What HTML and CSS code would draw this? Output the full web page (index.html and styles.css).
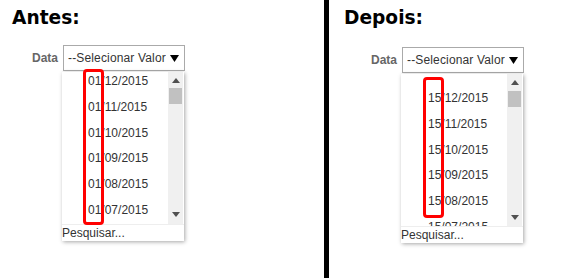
FILE: index.html
```html
<!DOCTYPE html>
<html lang="pt-BR">
  <head>
    <meta charset="UTF-8" />
    <meta name="viewport" content="width=device-width, initial-scale=1.0" />
    <title>Antes / Depois</title>
    <link rel="stylesheet" href="styles.css">
  </head>
  <body>
    <div class="page">
      <section class="panel panel-before">
        <h2>Antes:</h2>
        <div class="field">
          <span class="field-label">Data</span>
          <div class="combo">
            <div class="select">
              <span class="select-text">--Selecionar Valor</span>
              <svg class="caret" width="9" height="7" viewBox="0 0 9 7"><polygon points="0,0 9,0 4.5,7" /></svg>
            </div>
            <div class="dropdown">
              <div class="options">
                <ul class="option-list">
                  <li>01/12/2015</li>
                  <li>01/11/2015</li>
                  <li>01/10/2015</li>
                  <li>01/09/2015</li>
                  <li>01/08/2015</li>
                  <li>01/07/2015</li>
                </ul>
                <div class="scrollbar">
                  <div class="scroll-btn"><svg width="8" height="5" viewBox="0 0 8 5"><polygon points="0,5 8,5 4,0" /></svg></div>
                  <div class="scroll-thumb"></div>
                  <div class="scroll-space"></div>
                  <div class="scroll-btn scroll-btn-down"><svg width="8" height="5" viewBox="0 0 8 5"><polygon points="0,0 8,0 4,5" /></svg></div>
                </div>
              </div>
              <div class="search">Pesquisar...</div>
              <span class="highlight"></span>
            </div>
          </div>
        </div>
      </section>

      <div class="divider"></div>

      <section class="panel panel-after">
        <h2>Depois:</h2>
        <div class="field">
          <span class="field-label">Data</span>
          <div class="combo">
            <div class="select">
              <span class="select-text">--Selecionar Valor</span>
              <svg class="caret" width="9" height="7" viewBox="0 0 9 7"><polygon points="0,0 9,0 4.5,7" /></svg>
            </div>
            <div class="dropdown">
              <div class="options">
                <ul class="option-list">
                  <li>15/12/2015</li>
                  <li>15/11/2015</li>
                  <li>15/10/2015</li>
                  <li>15/09/2015</li>
                  <li>15/08/2015</li>
                  <li>15/07/2015</li>
                </ul>
                <div class="scrollbar">
                  <div class="scroll-btn"><svg width="8" height="5" viewBox="0 0 8 5"><polygon points="0,5 8,5 4,0" /></svg></div>
                  <div class="scroll-thumb"></div>
                  <div class="scroll-space"></div>
                  <div class="scroll-btn scroll-btn-down"><svg width="8" height="5" viewBox="0 0 8 5"><polygon points="0,0 8,0 4,5" /></svg></div>
                </div>
              </div>
              <div class="search">Pesquisar...</div>
              <span class="highlight"></span>
            </div>
          </div>
        </div>
      </section>
    </div>
  </body>
</html>
```

FILE: styles.css
```css
body {
  margin: 0;
  font-family: "Liberation Sans", Arial, sans-serif;
  font-size: 12px;
  color: #333;
  background: #fff;
}
.page {
  display: flex;
  height: 100vh;
}
.panel {
  padding-top: 7px;
  box-sizing: border-box;
}
.panel-before {
  width: 324px;
  padding-left: 12px;
}
.panel-after {
  flex: 1;
  padding-left: 15px;
}
.divider {
  width: 5px;
  background: #000;
}
.panel h2 {
  margin: 0;
  font-family: "DejaVu Sans", Verdana, sans-serif;
  font-size: 18.6px;
  line-height: 22px;
  font-weight: bold;
  color: #000;
}
.field {
  display: flex;
  align-items: flex-start;
  gap: 5px;
  margin: 16px 0 0 20px;
}
.panel-after .field {
  margin: 18px 0 0 27px;
}
.field-label {
  font-weight: bold;
  color: #666;
  line-height: 26px;
}
.combo {
  width: 122px;
}
.select {
  display: flex;
  align-items: center;
  height: 26px;
  box-sizing: border-box;
  border: 1px solid #aaa;
  padding: 0 5px 0 4px;
  background: #fff;
}
.select-text {
  flex: 1;
  overflow: hidden;
  white-space: nowrap;
  letter-spacing: 0.15px;
}
.caret {
  margin-left: 4px;
  fill: #000;
}
.dropdown {
  position: relative;
  width: 122px;
  margin: 1px 0 0 -1px;
  background: #fff;
  box-shadow: 1px 1px 4px rgba(0, 0, 0, 0.35);
}
.options {
  display: flex;
  height: 152px;
  overflow: hidden;
}
.option-list {
  flex: 1;
  list-style: none;
  margin: -3px 0 0;
  padding: 0 0 0 26px;
}
.panel-after .option-list {
  margin-top: 12px;
  padding-left: 27px;
}
.option-list li {
  height: 25.8px;
  line-height: 25.8px;
  white-space: nowrap;
}
.scrollbar {
  width: 15px;
  margin-right: 1px;
  display: flex;
  flex-direction: column;
  background: #f0f0f0;
}
.scroll-btn {
  height: 16px;
  display: flex;
  align-items: center;
  justify-content: center;
  fill: #505050;
}
.scroll-btn-down {
  height: 19px;
}
.panel-after .scroll-btn-down {
  height: 18px;
}
.panel-after .scroll-thumb {
  margin-top: 1px;
}
.scroll-thumb {
  height: 16px;
  margin: 0 1px;
  background: #c1c1c1;
}
.scroll-space {
  flex: 1;
}
.search {
  border-top: 1px solid #eee;
  line-height: 16px;
}
.highlight {
  position: absolute;
  left: 21px;
  top: -3px;
  width: 21px;
  height: 156px;
  box-sizing: border-box;
  border: 3px solid #f00;
  border-radius: 4px;
}
.panel-after .highlight {
  left: 22px;
  top: 3px;
  height: 141px;
}
```
